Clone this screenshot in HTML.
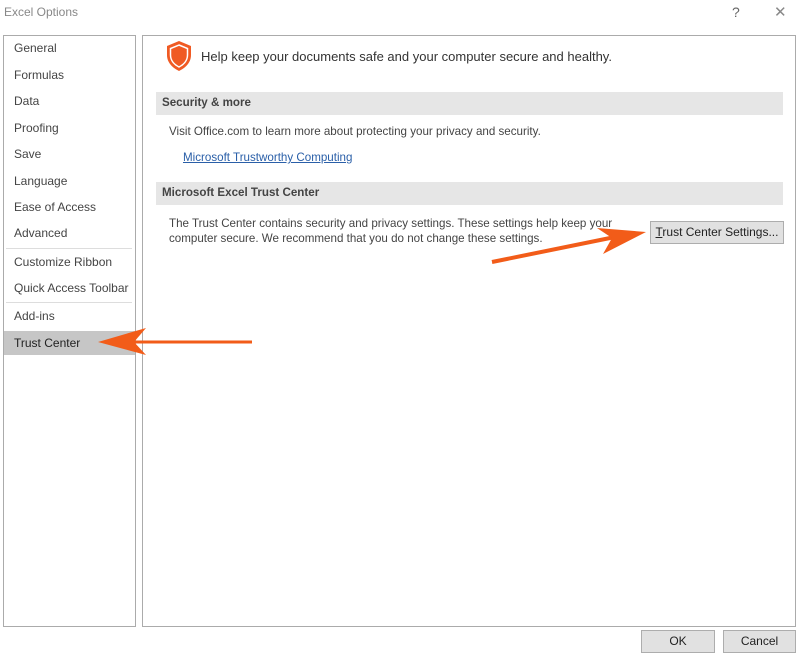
<!DOCTYPE html>
<html><head><style>
body{margin:0;width:800px;height:656px;background:#fff;font-family:"Liberation Sans",sans-serif;font-size:11.6px;color:#444;position:relative;overflow:hidden}
.a{position:absolute;white-space:nowrap}
.nav{position:absolute;left:14px;color:#444;font-size:12px}
.btn{position:absolute;background:#e1e1e1;border:1px solid #adadad;box-sizing:border-box;text-align:center;color:#222;font-size:12px}
</style></head><body>
<div class="a" style="left:4px;top:5px;color:#888;font-size:12px">Excel Options</div>
<div class="a" style="left:732px;top:4px;color:#666;font-size:14px">?</div>
<div class="a" style="left:774px;top:3px;color:#888;font-size:15px;font-weight:300">✕</div>
<div style="position:absolute;left:3px;top:35px;width:131px;height:590px;border:1px solid #ababab"></div>
<div style="position:absolute;left:142px;top:35px;width:652px;height:590px;border:1px solid #ababab"></div>
<div class="nav" style="top:41px">General</div>
<div class="nav" style="top:68px">Formulas</div>
<div class="nav" style="top:94px">Data</div>
<div class="nav" style="top:121px">Proofing</div>
<div class="nav" style="top:147px">Save</div>
<div class="nav" style="top:174px">Language</div>
<div class="nav" style="top:200px">Ease of Access</div>
<div class="nav" style="top:226px">Advanced</div>
<div style="position:absolute;left:6px;top:248px;width:126px;height:1px;background:#ddd"></div>
<div class="nav" style="top:255px">Customize Ribbon</div>
<div class="nav" style="top:281px">Quick Access Toolbar</div>
<div style="position:absolute;left:6px;top:302px;width:126px;height:1px;background:#ddd"></div>
<div class="nav" style="top:309px">Add-ins</div>
<div style="position:absolute;left:4px;top:331px;width:131px;height:24px;background:#c6c6c6"></div>
<div class="nav" style="top:336px;color:#222">Trust Center</div>
<svg style="position:absolute;left:165px;top:40px" width="28" height="32" viewBox="0 0 28 32"><path d="M14 1 L26 6 V15 C26 23 20 28 14 31 C8 28 2 23 2 15 V6 Z" fill="#f05a23"/><path d="M14 5 L22.5 8.5 V15 C22.5 21 18 25 14 27 C10 25 5.5 21 5.5 15 V8.5 Z" fill="none" stroke="#fff" stroke-width="1.5"/></svg>
<div class="a" style="left:201px;top:49px;font-size:13px;color:#333">Help keep your documents safe and your computer secure and healthy.</div>
<div style="position:absolute;left:156px;top:92px;width:627px;height:23px;background:#e6e6e6"></div>
<div class="a" style="left:162px;top:96px;font-weight:bold;color:#444">Security &amp; more</div>
<div class="a" style="left:169px;top:125px">Visit Office.com to learn more about protecting your privacy and security.</div>
<div class="a" style="left:183px;top:151px;color:#2a5fa8;text-decoration:underline">Microsoft Trustworthy Computing</div>
<div style="position:absolute;left:156px;top:182px;width:627px;height:23px;background:#e6e6e6"></div>
<div class="a" style="left:162px;top:186px;font-weight:bold;color:#444">Microsoft Excel Trust Center</div>
<div class="a" style="left:169px;top:216px;line-height:15px">The Trust Center contains security and privacy settings. These settings help keep your<br>computer secure. We recommend that you do not change these settings.</div>
<div class="btn" style="left:650px;top:221px;width:134px;height:23px;line-height:21px"><u>T</u>rust Center Settings...</div>
<div class="btn" style="left:641px;top:630px;width:74px;height:23px;line-height:21px">OK</div>
<div class="btn" style="left:723px;top:630px;width:73px;height:23px;line-height:21px">Cancel</div>
<svg style="position:absolute;left:0;top:0" width="800" height="656">
<line x1="252" y1="342" x2="130" y2="342" stroke="#f25c19" stroke-width="3"/>
<path d="M98 342 L146 328 L134 342 L146 355 Z" fill="#f25c19"/>
<line x1="492" y1="262" x2="615" y2="237" stroke="#f25c19" stroke-width="4"/>
<path d="M646 232 L597 228 L612 238 L603 254 Z" fill="#f25c19"/>
</svg>
</body></html>
